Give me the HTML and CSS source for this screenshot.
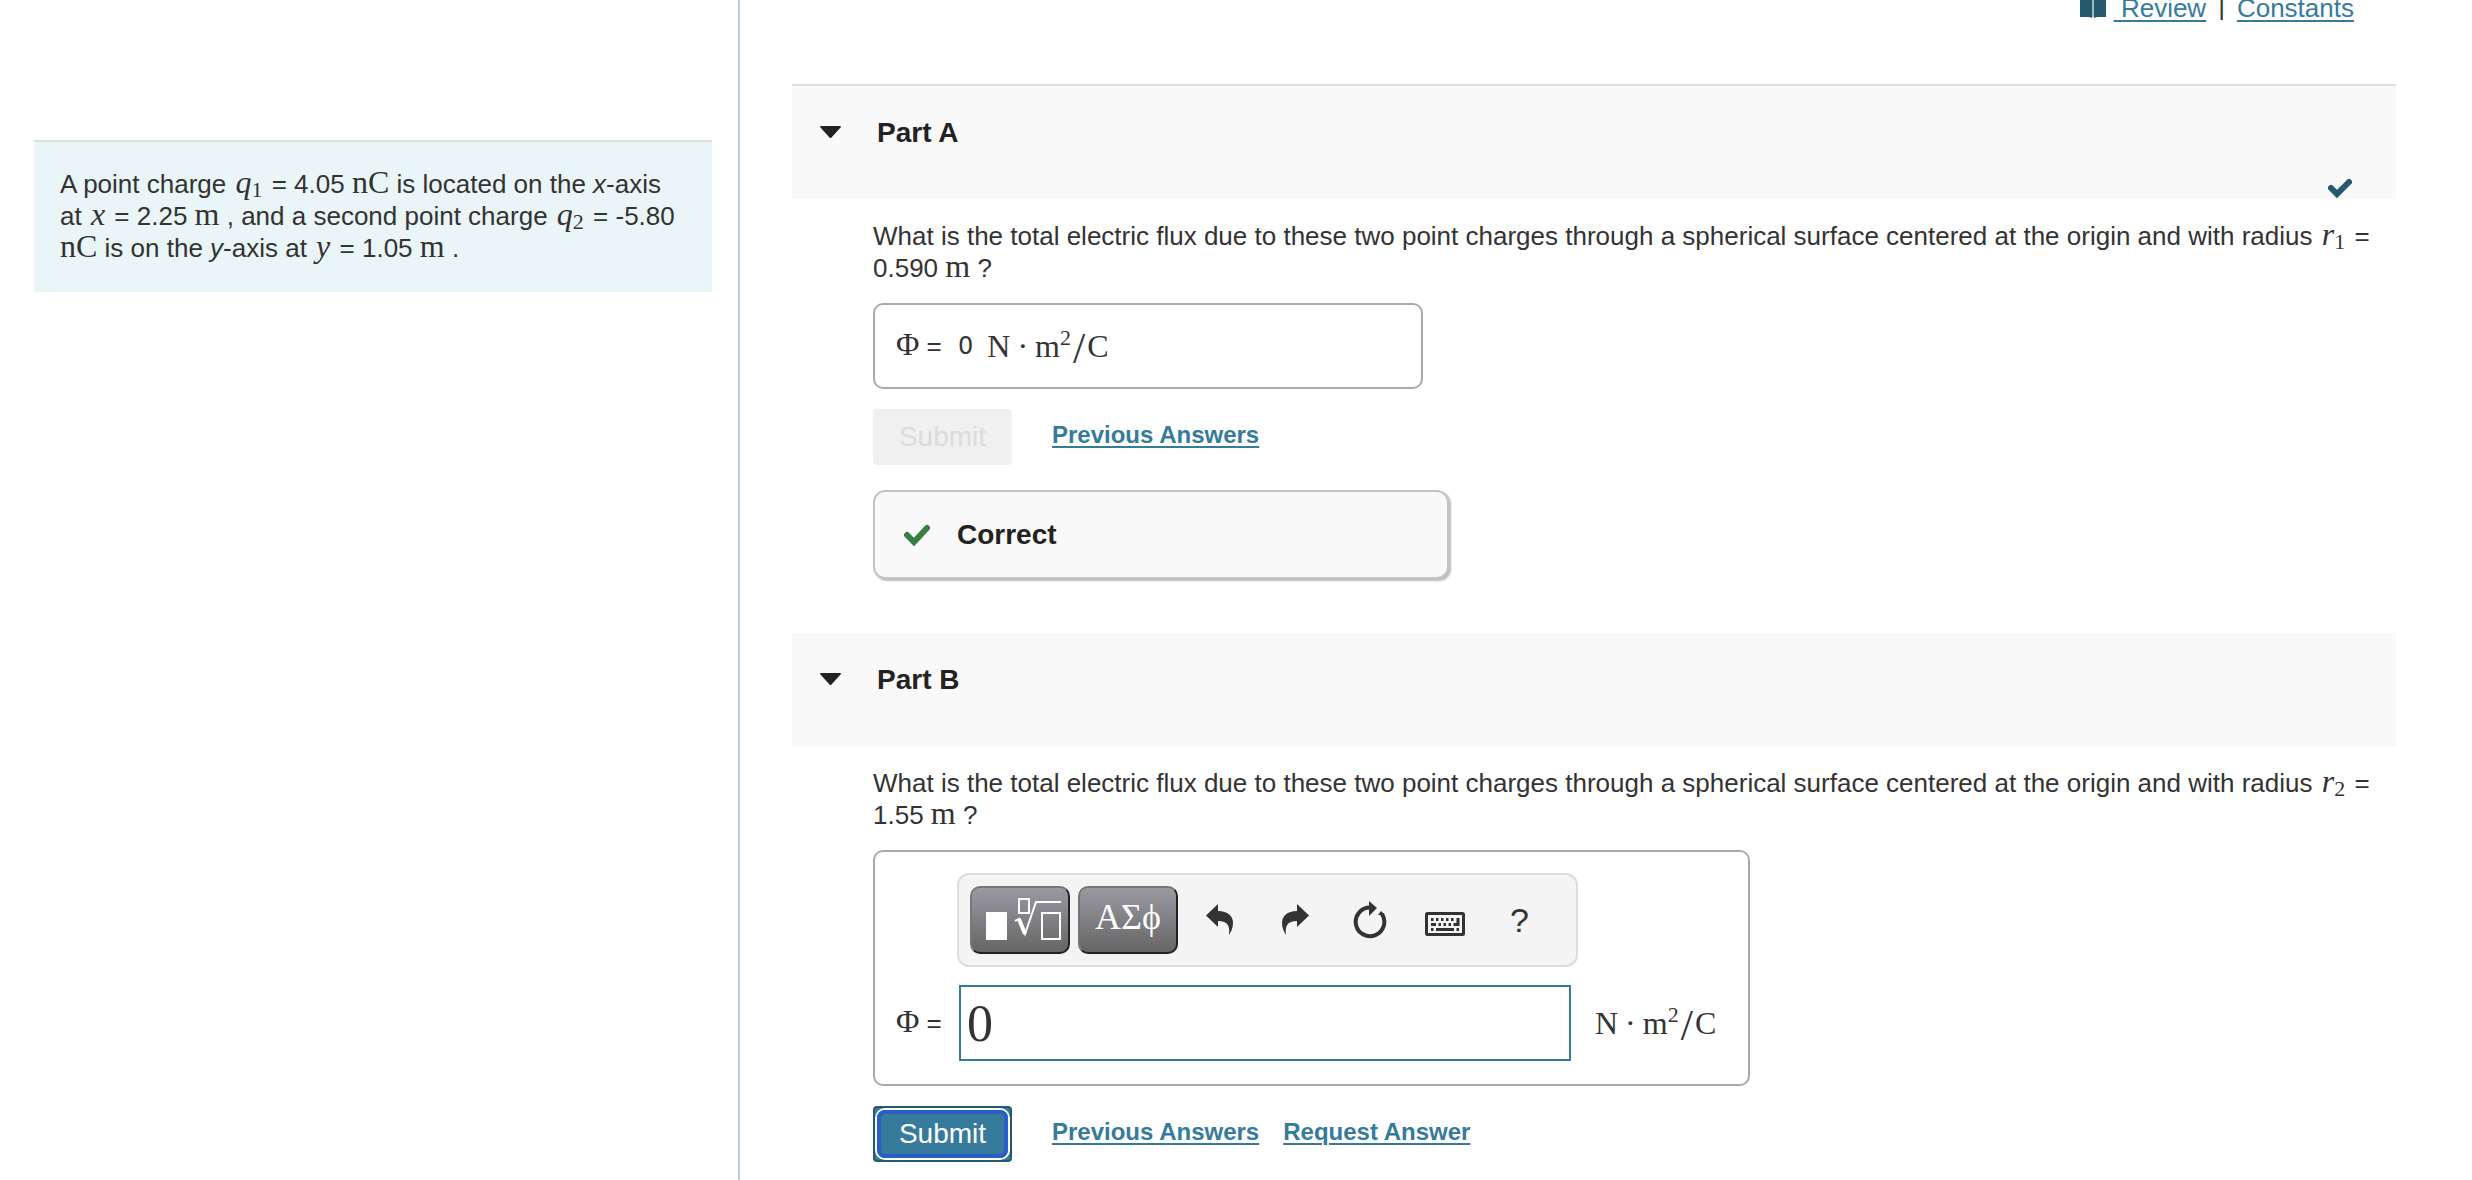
FILE: index.html
```html
<!DOCTYPE html>
<html lang="en">
<head>
<meta charset="utf-8">
<title>Electric flux problem</title>
<link rel="stylesheet" href="styles.css">
</head>
<body>
<div class="layout">
  <aside class="sidebar">
    <p class="problem">A point charge <span class="math"><i>q</i><sub>1</sub></span> = 4.05 <span class="math">nC</span> is located on the <i>x</i>-axis at <span class="math"><i>x</i></span> = 2.25 <span class="math">m</span> , and a second point charge <span class="math"><i>q</i><sub>2</sub></span> = -5.80 <span class="math">nC</span> is on the <i>y</i>-axis at <span class="math"><i>y</i></span> = 1.05 <span class="math">m</span> .</p>
  </aside>

  <main class="content">
    <nav class="topbar">
      <svg class="book" viewBox="0 0 26 22" aria-hidden="true"><path d="M0 0h10q2 0 2 1v21q-2-1-4-1H0zM26 0H16q-2 0-2 1v21q2-1 4-1h8z"/><path class="spine" d="M12 1h2v20h-2z"/></svg>
      <a class="review" href="#review">&nbsp;Review</a>
      <span class="divider">|</span>
      <a href="#constants">Constants</a>
    </nav>

    <section class="part">
      <header class="part-header first">
        <svg class="caret" viewBox="0 0 21 12" aria-hidden="true"><path d="M1 0h19q1 0 1 1L11.500 11.500q-1 1-2 0L0 1q0-1 1-1z"/></svg>
        <h2>Part A</h2>
        <svg class="done" viewBox="0 0 24 19" aria-label="Completed"><path d="M3 9l6 6L21 3"/></svg>
      </header>
      <div class="part-body">
        <p class="question">What is the total electric flux due to these two point charges through a spherical surface centered at the origin and with radius <span class="math"><i>r</i><sub>1</sub></span> = 0.590 <span class="math">m</span> ?</p>
        <div class="answer">
          <span class="lhs"><span class="math">Φ</span> =</span>
          <span class="value">0</span>
          <span class="math unit">N<b>·</b>m<sup>2</sup><span class="slash">/</span>C</span>
        </div>
        <div class="actions">
          <button class="submit" type="button" disabled>Submit</button>
          <a href="#previous-a">Previous Answers</a>
        </div>
        <div class="feedback">
          <svg class="tick" viewBox="0 0 28 22" aria-hidden="true"><path d="M4 11l7 7L24 4"/></svg>
          <strong>Correct</strong>
        </div>
      </div>
    </section>

    <section class="part">
      <header class="part-header">
        <svg class="caret" viewBox="0 0 21 12" aria-hidden="true"><path d="M1 0h19q1 0 1 1L11.500 11.500q-1 1-2 0L0 1q0-1 1-1z"/></svg>
        <h2>Part B</h2>
      </header>
      <div class="part-body">
        <p class="question">What is the total electric flux due to these two point charges through a spherical surface centered at the origin and with radius <span class="math"><i>r</i><sub>2</sub></span> = 1.55 <span class="math">m</span> ?</p>
        <form class="editor">
          <div class="toolbar">
            <button class="key" type="button" aria-label="Templates">
              <svg class="template" viewBox="0 0 76 44"><path class="solid" d="M0 15h21v28H0z"/><path d="M33 2h10v14H33zM56 16h18v26H56zM29 24l4-2 6 15L50 5h25"/><path class="thick" d="M33 22l6 15"/></svg>
            </button>
            <button class="key greek" type="button">ΑΣϕ</button>
            <button class="tool" type="button" aria-label="Undo">
              <svg class="arrow" viewBox="0 0 28 32"><path d="M12 0v7c10 0 15 5 15 12 0 5-2 9-4 12 1-9-1-14-11-14v6L0 11.500z"/></svg>
            </button>
            <button class="tool" type="button" aria-label="Redo">
              <svg class="arrow" viewBox="0 0 28 32"><path d="M16 0v7C6 7 1 12 1 19c0 5 2 9 4 12-1-9 1-14 11-14v6l12-11.500z"/></svg>
            </button>
            <button class="tool" type="button" aria-label="Reset">
              <svg class="reset" viewBox="0 0 34 38"><path class="ring" d="M17 6.500A14.300 14.300 0 1 0 29 13"/><path d="M16 0l8 7-8 8zM25 14l3-4 4 4z"/></svg>
            </button>
            <button class="tool" type="button" aria-label="Keyboard shortcuts">
              <svg class="keyboard" viewBox="0 0 40 24"><rect x="1.500" y="1.500" width="37" height="21" rx="1"/><path d="M6 7.500h2.500m2.500 0h2.500m2.500 0h2.500m2.500 0h2.500m2.500 0h2.500M6 12.500h5m2.500 0H16m2.500 0H21m2.500 0H26m2.500 0H33V6M6 17.500h2.500m2.500 0h18m2.500 0H34"/></svg>
            </button>
            <button class="tool help" type="button" aria-label="Help">?</button>
          </div>
          <div class="entry">
            <label class="lhs" for="flux"><span class="math">Φ</span> =</label>
            <input class="flux" id="flux" type="text" value="0">
            <span class="math unit">N<b>·</b>m<sup>2</sup><span class="slash">/</span>C</span>
          </div>
        </form>
        <div class="actions">
          <button class="submit focused" type="button">Submit</button>
          <a href="#previous-b">Previous Answers</a>
          <a href="#request">Request Answer</a>
        </div>
      </div>
    </section>
  </main>
</div>
</body>
</html>
```
FILE: styles.css
```css
* { box-sizing: border-box; }

body {
  margin: 0;
  background: #fff;
  color: #333;
  font: 26px/32px "Liberation Sans", Arial, sans-serif;
}

p, h2 { margin: 0; }

a {
  color: #367a9c;
  text-decoration-thickness: 2px;
  text-underline-offset: 3px;
}

.layout {
  display: grid;
  grid-template-columns: minmax(320px, 740px) 1fr;
  min-height: 100vh;
}

/* Problem statement */
.sidebar {
  border-right: 2px solid #b9cadb;
  padding: 140px 26px 0 34px;
}

.problem {
  padding: 26px 26px 28px;
  border-top: 2px solid #dcdfdf;
  background: #eaf5f8;
}

/* Maths set in serif, inside or beside sans text */
.math {
  font-family: "Liberation Serif", "Times New Roman", serif;
  font-size: 32px;
  line-height: 28px;
}
.math i { margin: 0 2px; }
.math sub, .math sup { font-size: 22px; line-height: 0; }
.math sub { margin: 0 2px 0 -2px; vertical-align: -4px; }
.math sup { vertical-align: 12px; }
.unit b { margin: 0 7px; font-weight: 400; }
.slash { margin: 0 2px; font-size: 44px; line-height: 0; vertical-align: -6px; }

/* Right-hand column */
.content {
  min-width: 0;
  padding: 0 76px 0 52px;
}

.topbar {
  display: flex;
  justify-content: flex-end;
  height: 24px;
  margin: -8px 42px 68px 0;
}
.book { width: 26px; height: 22px; margin: 4px 8px 0 0; fill: #25596d; }
.book .spine { fill: #9db5bf; }
.divider { margin: 0 12px; line-height: 28px; }

.part + .part { margin-top: 54px; }

.part-header {
  display: flex;
  align-items: flex-start;
  height: 113px;
  padding: 31px 44px 0 28px;
  background: #f9f9f9;
}
.part-header.first { height: 115px; border-top: 2px solid #ddd; }
.part-header h2 {
  flex: 1;
  margin-left: 36px;
  color: #222;
  font-size: 28px;
}
.caret { width: 21px; height: 12px; margin-top: 9px; fill: #222; }
.done { align-self: flex-end; width: 24px; height: 19px; margin-bottom: 1px; }
.done path { fill: none; stroke: #25596d; stroke-width: 6; stroke-linecap: round; }

.part-body { padding: 21px 0 0 81px; }
.question { margin-bottom: 19px; }

.answer, .editor {
  border: 2px solid #aaa;
  border-radius: 10px;
}
.answer {
  display: flex;
  align-items: center;
  width: 550px;
  max-width: 100%;
  height: 86px;
  padding: 0 20px;
}
.value { margin: 0 14px; font: 24px/32px "DejaVu Sans", Verdana, sans-serif; }
.unit { white-space: nowrap; line-height: 32px; }

.actions {
  display: flex;
  align-items: flex-start;
  gap: 24px;
  margin-top: 20px;
}
.actions a { margin-top: 10px; font-size: 24px; font-weight: 700; }
.submit {
  width: 139px;
  height: 56px;
  margin-right: 16px;
  padding: 0;
  border: 0;
  border-radius: 4px;
  background: #367a9c;
  color: #fff;
  font: 28px/32px "Liberation Sans", Arial, sans-serif;
}
.submit:disabled { background: #f0f0f0; color: #dcdcdc; }
.submit.focused {
  position: relative;
  border: 2px solid #25596d;
}
.submit.focused::after {
  content: "";
  position: absolute;
  inset: 2px;
  border: 4px solid #2a5dc8;
  border-radius: 8px;
  box-shadow: 0 0 0 2px #fff;
}

.feedback {
  display: flex;
  align-items: center;
  gap: 26px;
  width: 576px;
  max-width: 100%;
  height: 89px;
  margin-top: 25px;
  padding: 0 28px;
  border: 2px solid #c4c4c4;
  border-radius: 12px;
  background: #f9f9f9;
  box-shadow: 2px 2px 2px #bbb;
  color: #222;
  font-size: 28px;
}
.tick { width: 28px; height: 22px; }
.tick path { fill: none; stroke: #378042; stroke-width: 6; stroke-linecap: round; }

/* Equation editor */
.editor {
  width: 877px;
  max-width: 100%;
  padding: 21px 20px 23px;
}
.toolbar {
  display: flex;
  align-items: center;
  gap: 8px;
  width: 621px;
  height: 94px;
  margin-left: 62px;
  padding: 0 11px;
  border: 2px solid #ddd;
  border-radius: 12px;
  background: #f4f4f4;
}
.key {
  width: 100px;
  height: 68px;
  padding: 0;
  border: 2px solid;
  border-color: #777 #222 #222 #777;
  border-radius: 10px;
  background: linear-gradient(#9a99a2, #666);
  color: #fff;
}
.greek {
  padding-bottom: 6px;
  font: 36px/40px "Liberation Serif", "Times New Roman", serif;
}
.template { width: 76px; height: 44px; margin-left: 8px; fill: none; stroke: #fff; stroke-width: 2; }
.template .solid { fill: #fff; stroke: none; }
.template .thick { stroke-width: 4; }
.tool {
  display: flex;
  align-items: center;
  justify-content: center;
  width: 67px;
  height: 68px;
  padding: 0;
  border: 0;
  background: none;
  color: #333;
}
.tool svg { fill: #333; }
.arrow { width: 28px; height: 32px; }
.reset { width: 34px; height: 38px; }
.reset .ring { fill: none; stroke: #333; stroke-width: 4; }
.keyboard { width: 40px; height: 24px; margin-top: 8px; }
.tool .keyboard { fill: none; stroke: #333; stroke-width: 3; }
.help { font: 34px/40px "Liberation Sans", Arial, sans-serif; }

.entry {
  display: flex;
  align-items: center;
  margin-top: 18px;
}
.lhs { width: 48px; margin-left: 1px; white-space: nowrap; }
.entry .lhs { width: 63px; }
.flux {
  width: 612px;
  height: 76px;
  margin-right: 24px;
  padding: 0 6px;
  border: 2px solid #367a9c;
  border-radius: 0;
  background: #fff;
  color: #333;
  outline: 0;
  font: 52px/72px "Liberation Serif", "Times New Roman", serif;
}
```
